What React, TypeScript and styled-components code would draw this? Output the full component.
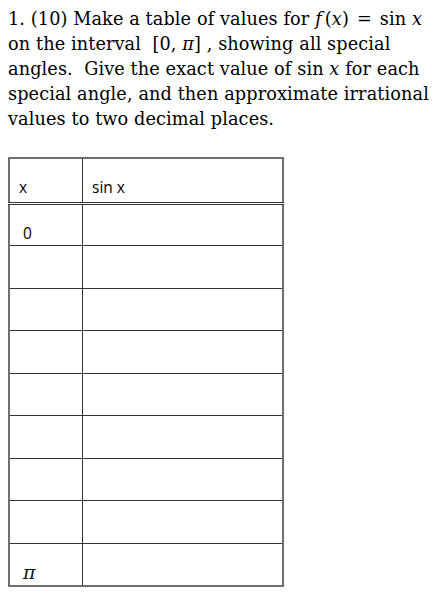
import * as React from "react";
import styled, { createGlobalStyle } from "styled-components";

const GlobalStyle = createGlobalStyle`
  html, body {
    margin: 0;
    padding: 0;
    background: #ffffff;
  }
`;

const Page = styled.div`
  width: 442px;
  height: 610px;
  padding: 7px 8px 0 8px;
  box-sizing: border-box;
  color: #000;
`;

const Prompt = styled.p`
  margin: 0;
  font-family: "DejaVu Serif", serif;
  font-size: 17.7px;
  line-height: 25px;
  letter-spacing: 0.1px;
`;

const Line = styled.span`
  display: block;
  white-space: pre;
`;

const MathVar = styled.span<{ $gap?: number }>`
  font-style: italic;
  margin-right: ${p => p.$gap ?? 0}px;
`;

const MathOp = styled.span`
  padding: 0 8px;
`;

const Grid = styled.table`
  margin-top: 25px;
  border-collapse: collapse;
  width: 276px;
  font-family: "Open Sans", sans-serif;
  font-size: 15.5px;
  border: 2px solid #707070;
`;

const HeadRow = styled.tr`
  height: 45px;
`;

const Row = styled.tr`
  height: 42.5px;
`;

const HeadCell = styled.th<{ $w?: number }>`
  ${p => (p.$w ? `width: ${p.$w}px;` : "")}
  padding: 0 0 4px 9px;
  text-align: left;
  vertical-align: bottom;
  font-weight: normal;
  border-right: 1px solid #333;
  border-bottom: 3px double #333;
`;

const Cell = styled.td<{ $first?: boolean }>`
  padding: 0 0 2px ${p => (p.$first ? 13 : 9)}px;
  vertical-align: bottom;
  line-height: 20px;
  border-right: 1px solid #333;
  border-bottom: 1px solid #333;
`;

const Pi = styled.span`
  font-family: "DejaVu Serif", serif;
  font-style: italic;
  font-size: 19px;
  color: #111;
`;

const rows: React.ReactNode[] = [
  "0",
  "",
  "",
  "",
  "",
  "",
  "",
  "",
  <Pi key="pi">π</Pi>,
];

export default function App() {
  return (
    <Page>
      <GlobalStyle />
      <Prompt>
        <Line>
          1. (10) Make a table of values for <MathVar $gap={3}>f</MathVar>(<MathVar>x</MathVar>)
          <MathOp>=</MathOp>sin <MathVar>x</MathVar>
        </Line>
        <Line>
          on the interval  [0, <MathVar>π</MathVar>] , showing all special
        </Line>
        <Line>
          angles.  Give the exact value of sin <MathVar>x</MathVar> for each
        </Line>
        <Line>special angle, and then approximate irrational</Line>
        <Line>values to two decimal places.</Line>
      </Prompt>
      <Grid>
        <thead>
          <HeadRow>
            <HeadCell $w={63}>x</HeadCell>
            <HeadCell>sin x</HeadCell>
          </HeadRow>
        </thead>
        <tbody>
          {rows.map((r, i) => (
            <Row key={i}>
              <Cell $first>{r}</Cell>
              <Cell />
            </Row>
          ))}
        </tbody>
      </Grid>
    </Page>
  );
}
